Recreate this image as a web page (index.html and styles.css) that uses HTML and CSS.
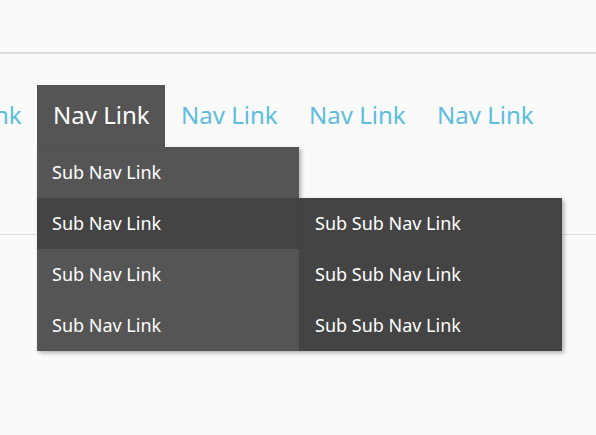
FILE: index.html
```html
<!DOCTYPE html>
<html>
<head>
<meta charset="utf-8">
<link rel="stylesheet" href="styles.css">
</head>
<body>
<header class="top"></header>
<section class="band">
  <nav class="nav">
    <ul class="menu">
      <li class="menu-item"><a class="menu-link" href="#">Nav Link</a></li>
      <li class="menu-item is-active">
        <a class="menu-link" href="#">Nav Link</a>
        <ul class="sub">
          <li class="sub-item"><a class="sub-link" href="#">Sub Nav Link</a></li>
          <li class="sub-item is-hover">
            <a class="sub-link" href="#">Sub Nav Link</a>
            <ul class="subsub">
              <li class="subsub-item"><a class="sub-link" href="#">Sub Sub Nav Link</a></li>
              <li class="subsub-item"><a class="sub-link" href="#">Sub Sub Nav Link</a></li>
              <li class="subsub-item"><a class="sub-link" href="#">Sub Sub Nav Link</a></li>
            </ul>
          </li>
          <li class="sub-item"><a class="sub-link" href="#">Sub Nav Link</a></li>
          <li class="sub-item"><a class="sub-link" href="#">Sub Nav Link</a></li>
        </ul>
      </li>
      <li class="menu-item"><a class="menu-link" href="#">Nav Link</a></li>
      <li class="menu-item"><a class="menu-link" href="#">Nav Link</a></li>
      <li class="menu-item"><a class="menu-link" href="#">Nav Link</a></li>
    </ul>
  </nav>
</section>
</body>
</html>
```
FILE: styles.css
```css
html {
  height: 100%;
  background: #fafafa;
}
body {
  margin: 0;
  padding: 0;
  min-height: 100%;
  overflow: hidden;
  font-family: "Noto Sans", Lato, sans-serif;
}
.top {
  height: 52px;
  border-bottom: 2px solid #dcdcdc;
}
.band {
  height: 181px;
  border-bottom: 1px solid #dcdcdc;
  padding-top: 31px;
  box-sizing: border-box;
}
.nav {
  margin-left: -91px;
}
.menu, .sub, .subsub {
  list-style: none;
  margin: 0;
  padding: 0;
}
.menu {
  display: flex;
  white-space: nowrap;
}
.menu-item {
  position: relative;
  width: 128px;
  height: 62px;
  flex: none;
}
.menu-link {
  display: block;
  height: 62px;
  line-height: 60px;
  padding-left: 16px;
  font-size: 24px;
  color: #5bbde0;
  text-decoration: none;
}
.is-active {
  background: #555555;
}
.is-active > .menu-link {
  color: #ffffff;
}
.sub {
  position: absolute;
  left: 0;
  top: 62px;
  width: 262px;
  background: #555555;
  box-shadow: 2px 2px 4px rgba(0, 0, 0, 0.3);
  z-index: 2;
}
.sub-item {
  position: relative;
  height: 51px;
}
.sub-item.is-hover {
  background: #444444;
}
.sub-link {
  display: block;
  height: 51px;
  line-height: 50px;
  padding-left: 15px;
  font-size: 18px;
  color: #ffffff;
  text-decoration: none;
}
.subsub {
  position: absolute;
  left: 262px;
  top: 0;
  width: 263px;
  background: #444444;
  box-shadow: 2px 2px 4px rgba(0, 0, 0, 0.3);
}
.subsub-item {
  height: 51px;
}
.subsub-item .sub-link {
  padding-left: 16px;
}
```
